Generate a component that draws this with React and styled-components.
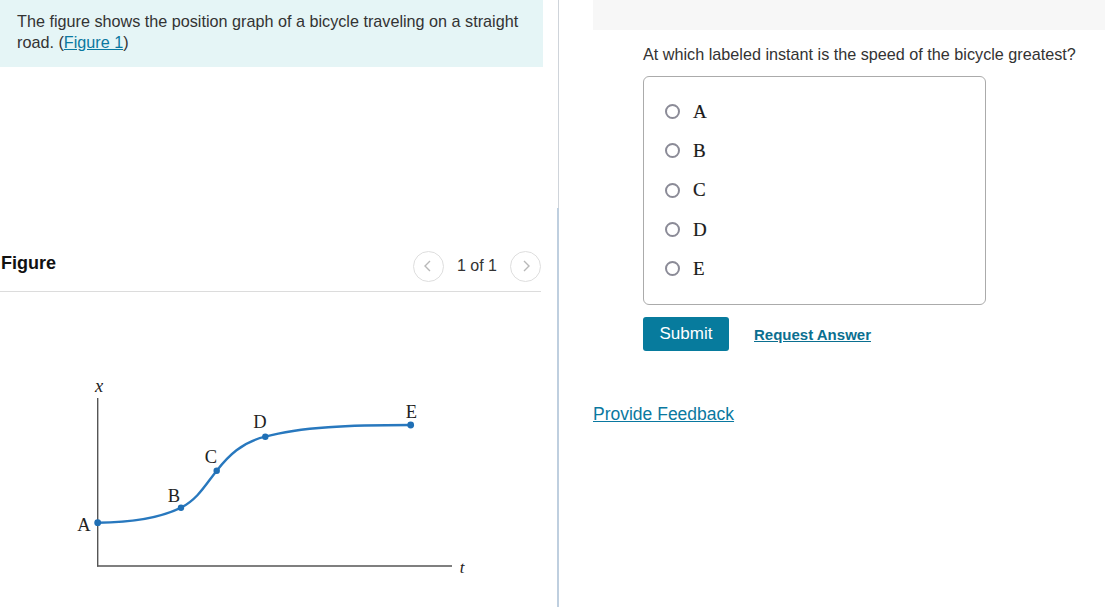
import React from "react";
import styled, { createGlobalStyle } from "styled-components";

const Global = createGlobalStyle`
  html, body { margin: 0; padding: 0; background: #fff; }
  body { font-family: "Liberation Sans", Arial, sans-serif; color: #333; }
`;

const Page = styled.div`
  display: flex;
  width: 1105px;
  height: 607px;
  overflow: hidden;
`;

const LeftPane = styled.div`
  width: 543px;
  margin-right: 14px;
  display: flex;
  flex-direction: column;
`;

const Banner = styled.div`
  flex: none;
  background: #e5f5f6;
  height: 67px;
  box-sizing: border-box;
  padding: 11px 17px 0;
  font-size: 16.2px;
  line-height: 21px;
  color: #333;
`;

const Link = styled.a`
  color: ${(p) => p.$color || "#0a78a0"};
  text-decoration: underline;
  font-size: ${(p) => p.$size || "inherit"};
  font-weight: ${(p) => (p.$bold ? 700 : 400)};
  cursor: pointer;
`;

const FigureHeader = styled.div`
  flex: none;
  margin-top: 178px;
  height: 47px;
  width: 541px;
  box-sizing: border-box;
  border-bottom: 1px solid #dcdcdc;
  display: flex;
  align-items: center;
  justify-content: space-between;
  padding-left: 1px;
`;

const FigureTitle = styled.div`
  font-size: 18px;
  font-weight: 700;
  color: #111;
  margin-top: -9px;
`;

const Pager = styled.div`
  display: flex;
  align-items: center;
  gap: 13px;
  font-size: 16px;
  color: #333;
  margin-top: -4px;
`;

const PageButton = styled.button`
  width: 31px;
  height: 31px;
  border-radius: 50%;
  border: 1px solid #dedede;
  background: #fff;
  padding: 0;
  display: flex;
  align-items: center;
  justify-content: center;
`;

const FigureArea = styled.div`
  flex: 1;
  min-height: 0;
  svg { display: block; }
`;

const Splitter = styled.div`
  width: 2px;
  display: flex;
  flex-direction: column;
`;

const SplitTop = styled.div`
  height: 208px;
  border-right: 1px solid #cfd4da;
  width: 1px;
`;

const SplitBottom = styled.div`
  flex: 1;
  background: #bfcfdf;
`;

const RightPane = styled.div`
  flex: 1;
  padding-left: 34px;
  display: flex;
  flex-direction: column;
`;

const TopBand = styled.div`
  flex: none;
  height: 30px;
  background: #f7f7f7;
`;

const Question = styled.div`
  margin: 15px 0 0 50px;
  font-size: 16.2px;
  line-height: 18px;
  color: #333;
`;

const ChoiceBox = styled.div`
  flex: none;
  margin: 13px 0 0 50px;
  width: 343px;
  height: 229px;
  box-sizing: border-box;
  border: 1px solid #ababab;
  border-radius: 6px;
  padding: 15px 0 0 21px;
`;

const ChoiceRow = styled.label`
  display: flex;
  align-items: center;
  height: 39.3px;
  gap: 13px;
`;

const Radio = styled.span`
  width: 15px;
  height: 15px;
  box-sizing: border-box;
  border: 2px solid #8b8b97;
  border-radius: 50%;
  flex: none;
`;

const ChoiceLabel = styled.span`
  font-family: "Liberation Serif", "DejaVu Serif", serif;
  font-size: 19px;
  color: #1a1a1a;
  -webkit-text-stroke: 0.2px #1a1a1a;
`;

const Actions = styled.div`
  margin: 12px 0 0 50px;
  display: flex;
  align-items: center;
  gap: 25px;
`;

const SubmitButton = styled.button`
  width: 86px;
  height: 34px;
  background: #077b9d;
  color: #fff;
  border: none;
  border-radius: 3px;
  font-family: "Liberation Sans", Arial, sans-serif;
  font-size: 17px;
  padding: 0;
`;

const Feedback = styled.div`
  margin-top: 53px;
  font-size: 17.5px;
`;

const Chevron = ({ dir }) => (
  <svg width="12" height="14" viewBox="0 0 12 14">
    <path
      d={dir === "left" ? "M8 2 L3 7 L8 12" : "M4 2 L9 7 L4 12"}
      fill="none"
      stroke="#b8b8b8"
      strokeWidth="1.4"
    />
  </svg>
);

const Graph = () => (
  <svg width="543" height="315" viewBox="0 292 543 315">
    <g fill="none" stroke="#555" strokeWidth="1.4">
      <line x1="97.7" y1="398" x2="97.7" y2="566.5" />
      <line x1="97" y1="566" x2="452" y2="566" />
    </g>
    <path
      d="M97.7 522.7 C130 522.5 160 518 181 507.7 C198 499 206 484 216.7 470.7 C228 456 242 442 265.3 436.7 C300 427 350 425 410.7 425"
      fill="none"
      stroke="#2878be"
      strokeWidth="2.4"
    />
    <g fill="#1f6fb5">
      <circle cx="97.7" cy="522.7" r="3.4" />
      <circle cx="181" cy="507.7" r="3.2" />
      <circle cx="216.7" cy="470.7" r="3.2" />
      <circle cx="265.3" cy="436.7" r="3.2" />
      <circle cx="410.7" cy="425" r="3.4" />
    </g>
    <g
      fontFamily='"Liberation Serif", "Times New Roman", serif'
      fontSize="18.5"
      fill="#222"
      textAnchor="middle"
    >
      <text x="99" y="392" fontStyle="italic">x</text>
      <text x="462" y="573" fontStyle="italic" fontSize="17">t</text>
      <text x="84" y="530.5">A</text>
      <text x="174" y="502">B</text>
      <text x="211" y="462.5">C</text>
      <text x="260" y="428">D</text>
      <text x="411.5" y="418">E</text>
    </g>
  </svg>
);

export default function App() {
  const choices = ["A", "B", "C", "D", "E"];
  return (
    <Page>
      <Global />
      <LeftPane>
        <Banner>
          The figure shows the position graph of a bicycle traveling on a straight
          road. (<Link>Figure 1</Link>)
        </Banner>
        <FigureHeader>
          <FigureTitle>Figure</FigureTitle>
          <Pager>
            <PageButton aria-label="previous">
              <Chevron dir="left" />
            </PageButton>
            <span>1 of 1</span>
            <PageButton aria-label="next">
              <Chevron dir="right" />
            </PageButton>
          </Pager>
        </FigureHeader>
        <FigureArea>
          <Graph />
        </FigureArea>
      </LeftPane>
      <Splitter>
        <SplitTop />
        <SplitBottom />
      </Splitter>
      <RightPane>
        <TopBand />
        <Question>At which labeled instant is the speed of the bicycle greatest?</Question>
        <ChoiceBox>
          {choices.map((c) => (
            <ChoiceRow key={c}>
              <Radio />
              <ChoiceLabel>{c}</ChoiceLabel>
            </ChoiceRow>
          ))}
        </ChoiceBox>
        <Actions>
          <SubmitButton>Submit</SubmitButton>
          <Link $bold $size="15px" $color="#0b6f90">Request Answer</Link>
        </Actions>
        <Feedback>
          <Link>Provide Feedback</Link>
        </Feedback>
      </RightPane>
    </Page>
  );
}
